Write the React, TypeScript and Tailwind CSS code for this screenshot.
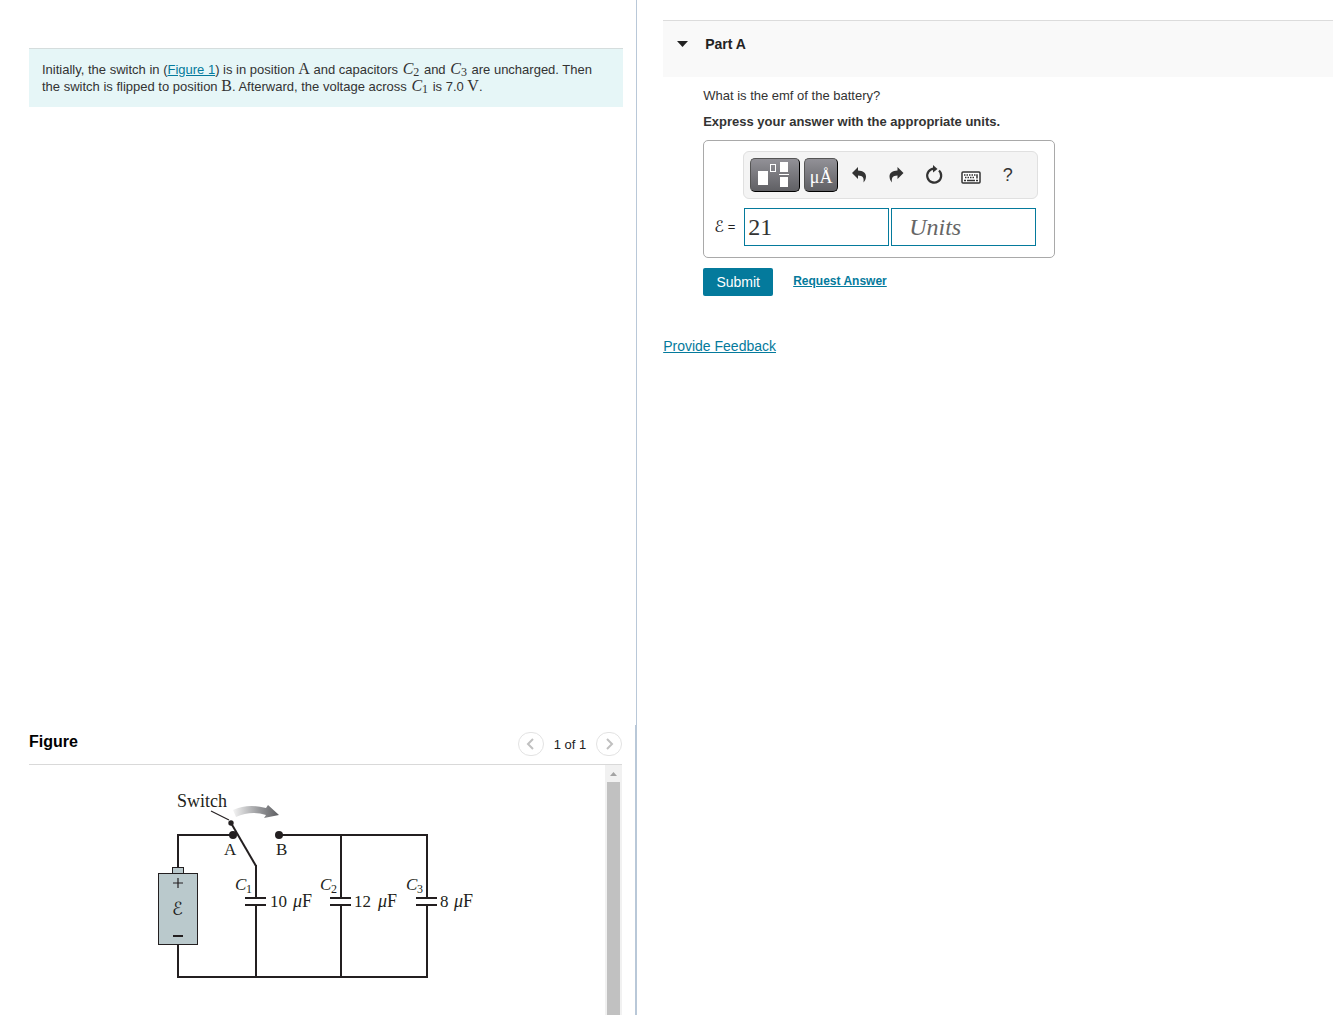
import { useState } from 'react';
import type { ReactNode } from 'react';

const serif = "font-['Liberation_Serif',serif]";

function MathText({ children }: { children: ReactNode }) {
  return <span className="font-['Liberation_Serif',serif] text-base leading-none">{children}</span>;
}

function Cap({ n }: { n: number }) {
  return (
    <span className="mx-px">
      <MathText>
        <i>C</i>
        <sub className="bottom-[-2px] text-xs leading-none">{n}</sub>
      </MathText>
    </span>
  );
}

function Capacitor({ x, top, n, value }: { x: number; top: number; n: number; value: string }) {
  return (
    <g>
      <path d={`M${x} ${top}V113M${x} 120V192`} stroke="#231f20" strokeWidth="2" fill="none" />
      <path d={`M${x - 11} 113H${x + 10}M${x - 11} 120H${x + 10}`} stroke="#231f20" strokeWidth="2" />
      <text x={x - 21} y="105" fontSize="17" fontStyle="italic">C</text>
      <text x={x - 10} y="108" fontSize="12">{n}</text>
      <text x={x + (n === 1 ? 14 : 13)} y="122" fontSize="17">{value}</text>
      <text x={x + (n === 3 ? 27 : 37)} y="122" fontSize="18">
        <tspan fontStyle="italic">μ</tspan>F
      </text>
    </g>
  );
}

function Circuit() {
  return (
    <svg
      width="334"
      height="200"
      viewBox="0 0 334 200"
      role="img"
      aria-label="Circuit with a battery, a switch and three capacitors"
      fill="#231f20"
      className="font-['Liberation_Serif',serif]"
    >
      <defs>
        <linearGradient id="arrow" x1="0" x2="1">
          <stop offset="0" stopColor="#f4f4f4" />
          <stop offset="0.6" stopColor="#929396" />
          <stop offset="1" stopColor="#5d5e61" />
        </linearGradient>
      </defs>
      <text x="27" y="22" fontSize="18">Switch</text>
      <path d="M61 26L79 35" stroke="#231f20" strokeWidth="1.2" />
      <path d="M83 25Q98 18 116 23L118 20L129 30L114 33L116 30Q101 25 86 32Z" fill="url(#arrow)" />
      <path d="M28 82V50H83M28 160V192H277V50H129" fill="none" stroke="#231f20" strokeWidth="2" strokeLinejoin="miter" />
      <path d="M81 38L106 81" stroke="#231f20" strokeWidth="2" />
      <circle cx="81" cy="38" r="2.7" />
      <circle cx="83" cy="50" r="4" />
      <circle cx="129" cy="50" r="4" />
      <text x="74" y="70" fontSize="17">A</text>
      <text x="126" y="70" fontSize="17">B</text>
      <g fill="#bac9cc" stroke="#231f20" strokeWidth="1">
        <rect x="22.5" y="82.500" width="11" height="6" />
        <rect x="8.500" y="88.500" width="39" height="71" />
      </g>
      <path d="M23 98H33M28 93V103" stroke="#231f20" strokeWidth="1.2" />
      <path d="M23 151H33" stroke="#231f20" strokeWidth="2" />
      <text x="22" y="130" fontSize="18" className="font-['DejaVu_Sans',sans-serif] italic">ℰ</text>
      <Capacitor x={106} top={80} n={1} value="10" />
      <Capacitor x={191} top={50} n={2} value="12" />
      <Capacitor x={277} top={50} n={3} value="8" />
      <rect x="275" y="114" width="4" height="5" fill="white" />
    </svg>
  );
}

function PageButton({ label, d }: { label: string; d: string }) {
  return (
    <button aria-label={label} className="flex h-6 w-[26px] items-center justify-center rounded-full border border-[#e3e3e3] bg-white">
      <svg width="10" height="12" viewBox="0 0 10 12" fill="none" stroke="#c0c0c0" strokeWidth="2">
        <path d={d} />
      </svg>
    </button>
  );
}

function LeftPane() {
  return (
    <section className="flex w-[47.8%] shrink-0 flex-col">
      <div className="flex-1 border-r border-[#b9c8d8] pt-12 pr-[13px] pl-[29px]">
        <p className="border-t border-[#d5dddd] bg-[#e6f6f7] pt-3 pr-5 pb-3 pl-[13px] text-[13px] leading-4 text-[#333]">
          Initially, the switch in (<a href="#figure" className="text-[#047a9c] underline">Figure 1</a>) is in position{' '}
          <MathText>A</MathText> and capacitors <Cap n={2} /> and <Cap n={3} /> are uncharged. Then the switch is
          flipped to position <MathText>B</MathText>. Afterward, the voltage across <Cap n={1} /> is 7.0{' '}
          <MathText>V</MathText>.
        </p>
      </div>
      <div id="figure" className="flex h-[290px] flex-col border-r-2 border-[#b9c8d8] pr-[13px] pl-[29px]">
        <header className="flex h-10 shrink-0 items-center justify-between border-b border-[#d9d9d9]">
          <h2 className="pb-1.5 text-base font-bold text-black">Figure</h2>
          <nav aria-label="Figures" className="flex items-center gap-2.5 pb-px">
            <PageButton label="Previous figure" d="M7 1L2 6L7 11" />
            <span className="pt-0.5 text-[13px] text-[#222]">1 of 1</span>
            <PageButton label="Next figure" d="M3 1L8 6L3 11" />
          </nav>
        </header>
        <div className="flex min-h-0 flex-1">
          <div className="flex flex-1 justify-center overflow-hidden pt-5">
            <Circuit />
          </div>
          <div className="flex w-[17px] flex-col items-center bg-[#f1f1f1]">
            <svg width="17" height="17" viewBox="0 0 17 17" aria-hidden="true" className="shrink-0">
              <path d="M5 11L8.500 7L12 11Z" fill="#a3a3a3" />
            </svg>
            <div className="w-[13px] flex-1 bg-[#c1c1c1]" />
          </div>
        </div>
      </div>
    </section>
  );
}

const darkButton =
  'flex h-[34px] items-center justify-center rounded-[5px] border border-t-[#555] border-l-[#555] border-r-black border-b-black bg-linear-to-b from-[#929197] to-[#606064] text-white';
const plainButton = 'flex h-[34px] w-[37px] items-center justify-center text-[#333]';

function Toolbar() {
  return (
    <div role="toolbar" className="ml-[39px] flex h-12 w-[295px] items-center rounded-md border border-[#e0e0e0] bg-[#f4f4f4] pl-1.5">
      <button aria-label="Templates" className={darkButton + ' w-[50px] pr-0.5'}>
        <svg width="32" height="26" viewBox="0 0 32 26" fill="white">
          <rect x="0" y="9" width="10" height="14" />
          <rect x="12.500" y="2.500" width="5" height="7" fill="none" stroke="white" />
          <rect x="22" y="0" width="8" height="10" />
          <rect x="21" y="12" width="10" height="1" />
          <rect x="22" y="15" width="8" height="10" />
        </svg>
      </button>
      <button aria-label="Symbols" className={darkButton + ' ml-1 w-[34px] pt-1 text-lg ' + serif}>
        μÅ
      </button>
      <button aria-label="Undo" className={plainButton + ' ml-[3px]'}>
        <svg width="15" height="16" viewBox="0 0 15 16" fill="currentColor">
          <path d="M6 0V3.500C11 3.700 14 6 14 9.500C14 12 12.800 14 11.500 15.500C12.200 11 11 8.600 6 8.500V12L0 6Z" />
        </svg>
      </button>
      <button aria-label="Redo" className={plainButton}>
        <svg width="15" height="16" viewBox="0 0 15 16" fill="currentColor">
          <path d="M8.500 0V3.500C3.500 3.700 .5 6 .5 9.500C.5 12 1.700 14 3 15.500C2.300 11 3.500 8.600 8.500 8.500V12L14.500 6Z" />
        </svg>
      </button>
      <button aria-label="Reset" className={plainButton}>
        <svg width="18" height="20" viewBox="0 0 18 20">
          <path d="M14 5.500A7 7 0 1 1 9 3.600" fill="none" stroke="currentColor" strokeWidth="2.200" />
          <path d="M8 0L12.500 4L8 7.500Z" fill="currentColor" />
        </svg>
      </button>
      <button aria-label="Keyboard shortcuts" className={plainButton}>
        <svg width="20" height="13" viewBox="0 0 20 13" className="mt-1">
          <rect x="1" y="1" width="18" height="11" rx="1" fill="white" stroke="currentColor" strokeWidth="1.500" />
          <path d="M3 4H15M4 6.500H14" stroke="currentColor" strokeWidth="1.500" strokeDasharray="1.500 1" />
          <path d="M3 9.500H5M6 9.500H14M15 9.500H17M16 3.200V7.500" stroke="currentColor" strokeWidth="1.500" />
        </svg>
      </button>
      <button aria-label="Help" className={plainButton + ' text-lg'}>?</button>
    </div>
  );
}

function AnswerBox() {
  const [value, setValue] = useState('21');
  const [units, setUnits] = useState('');
  return (
    <div className="w-[352px] rounded-[5px] border border-[#a9a9a9] pt-2.5 pb-[11px]">
      <Toolbar />
      <div className="mt-[9px] flex items-center">
        <label htmlFor="value" className="flex w-10 items-center gap-1 pl-2.5 text-[13px] text-[#222]">
          <span className="font-['DejaVu_Sans',sans-serif] text-base leading-none italic">ℰ</span>
          <span>=</span>
        </label>
        <input
          id="value"
          value={value}
          onChange={(e) => setValue(e.target.value)}
          className={'h-[38px] w-[145px] border border-[#047a9c] px-[3px] text-2xl text-[#333] ' + serif}
        />
        <input
          aria-label="Units"
          placeholder="Units"
          value={units}
          onChange={(e) => setUnits(e.target.value)}
          className={'ml-0.5 h-[38px] w-[145px] border border-[#047a9c] px-[17px] text-2xl italic text-[#333] placeholder:text-[#666] ' + serif}
        />
      </div>
    </div>
  );
}

export default function App() {
  return (
    <main className="flex h-screen bg-white font-['Liberation_Sans',sans-serif]">
      <LeftPane />
      <section className="min-w-0 flex-1 pt-5 pl-[26px]">
        <header className="border-t border-[#dcdcdc] bg-[#f9f9f9]">
          <button aria-expanded="true" className="flex h-14 w-full items-center gap-[17px] pb-2.5 pl-3.5 text-sm font-bold text-[#222]">
            <svg width="11" height="6" viewBox="0 0 11 6" fill="#222">
              <path d="M0 0H11L5.500 6Z" />
            </svg>
            Part A
          </button>
        </header>
        <div className="pl-10 text-[13px] leading-4 text-[#333]">
          <p className="pt-[11px]">What is the emf of the battery?</p>
          <p className="pt-2.5 pb-[10px] font-bold">Express your answer with the appropriate units.</p>
          <AnswerBox />
          <div className="mt-2.5 flex items-center gap-5">
            <button className="h-7 w-[70px] rounded-[2px] bg-[#047a9c] text-sm text-white">Submit</button>
            <a href="#answer" className="pb-0.5 text-xs font-bold text-[#047a9c] underline">Request Answer</a>
          </div>
        </div>
        <a href="#feedback" className="mt-10 inline-block text-sm text-[#047a9c] underline">Provide Feedback</a>
      </section>
    </main>
  );
}
